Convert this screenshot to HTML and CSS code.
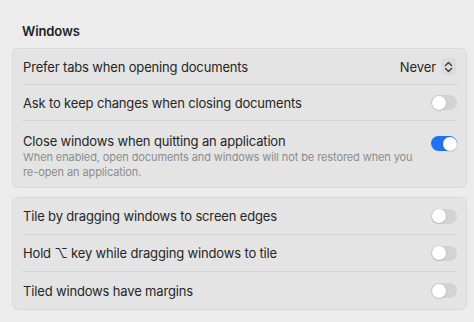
FILE: index.html
```html
<!DOCTYPE html>
<html>
<head>
<meta charset="utf-8">
<link rel="stylesheet" href="styles.css">
</head>
<body>
<div class="pane">
  <h2 class="title">Windows</h2>
  <div class="group">
    <div class="row">
      <span class="label">Prefer tabs when opening documents</span>
      <span class="popup">Never
        <span class="stepper"><svg width="9" height="12" viewBox="0 0 9 12"><path d="M1.5 4.5 L4.5 1.5 L7.5 4.5 M1.5 7.5 L4.5 10.5 L7.5 7.5" fill="none" stroke="#3a3a3a" stroke-width="1.4" stroke-linecap="round" stroke-linejoin="round"/></svg></span>
      </span>
    </div>
    <div class="row">
      <span class="label">Ask to keep changes when closing documents</span>
      <span class="toggle"></span>
    </div>
    <div class="row tall">
      <div class="text">
        <span class="label">Close windows when quitting an application</span>
        <span class="sub">When enabled, open documents and windows will not be restored when you re-open an application.</span>
      </div>
      <span class="toggle on"></span>
    </div>
  </div>
  <div class="group roomy">
    <div class="row">
      <span class="label">Tile by dragging windows to screen edges</span>
      <span class="toggle"></span>
    </div>
    <div class="row">
      <span class="label">Hold ⌥ key while dragging windows to tile</span>
      <span class="toggle"></span>
    </div>
    <div class="row">
      <span class="label">Tiled windows have margins</span>
      <span class="toggle"></span>
    </div>
  </div>
</div>
</body>
</html>
```
FILE: styles.css
```css
html, body {
  margin: 0;
  padding: 0;
  background: #ececec;
}
body {
  font-family: Inter, "Noto Sans", "DejaVu Sans", sans-serif;
  color: #262626;
  width: 474px;
  height: 322px;
  overflow: hidden;
}
.pane {
  padding: 22px 7px 0 12px;
  display: flex;
  flex-direction: column;
  gap: 9px;
}
.title {
  margin: 0 0 -1px 10px;
  font-size: 13px;
  font-weight: 600;
  line-height: 18px;
  height: 18px;
  color: #1e1e1e;
  letter-spacing: -0.1px;
}
.group {
  background: #e4e4e4;
  border: 1px solid #dadada;
  border-radius: 6px;
  padding: 0 9px;
}
.row {
  display: flex;
  align-items: center;
  justify-content: space-between;
  height: 36px;
  border-bottom: 1px solid #d6d6d6;
  box-sizing: border-box;
  padding-left: 1px;
}
.roomy .row {
  height: 37px;
}
.row:last-child {
  border-bottom: none;
}
.row.tall {
  height: 66px;
  align-items: flex-start;
  padding-top: 12px;
}
.label {
  font-size: 13px;
  line-height: 16px;
  letter-spacing: -0.16px;
}
.text {
  display: flex;
  flex-direction: column;
  gap: 1px;
}
.sub {
  font-size: 11px;
  line-height: 15px;
  color: #8c8c8c;
  width: 400px;
  letter-spacing: -0.1px;
}
.popup {
  display: flex;
  align-items: center;
  gap: 5px;
  font-size: 13px;
  letter-spacing: -0.1px;
  margin-right: 1px;
}
.stepper {
  display: flex;
  align-items: center;
  justify-content: center;
  width: 15px;
  height: 17px;
  border-radius: 4px;
  background: #dcdcdc;
}
.toggle {
  position: relative;
  width: 26px;
  height: 15px;
  border-radius: 8px;
  background: #d3d3d3;
  flex: none;
}
.toggle::after {
  content: "";
  position: absolute;
  top: 0.5px;
  left: 0.5px;
  width: 14px;
  height: 14px;
  border-radius: 50%;
  background: #ffffff;
  box-shadow: 0 0.5px 1.5px rgba(0,0,0,0.25);
}
.toggle.on {
  background: #1f73f0;
  margin-top: 3px;
}
.toggle.on::after {
  left: auto;
  right: 0.5px;
}
```
